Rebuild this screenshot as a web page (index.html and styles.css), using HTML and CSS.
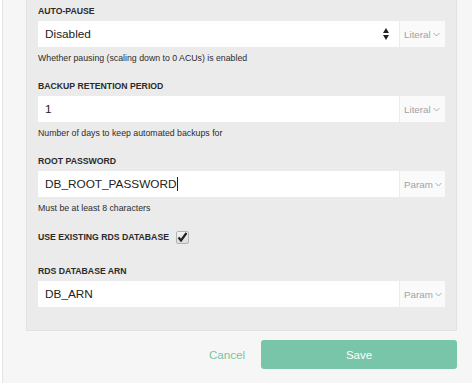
FILE: index.html
```html
<!DOCTYPE html>
<html>
<head>
<meta charset="utf-8">
<link rel="stylesheet" href="styles.css">
</head>
<body>
<div class="panel">
  <div class="fields">
    <div class="group">
      <div class="label">AUTO-PAUSE</div>
      <div class="control">
        <div class="input select">
          <span>Disabled</span>
          <svg class="arrows" width="6" height="12" viewBox="0 0 6 12"><path d="M3 0 L6 5 L0 5 Z M0 7 L6 7 L3 12 Z" fill="#222"/></svg>
        </div>
        <div class="addon">Literal <svg class="chev" width="7" height="5" viewBox="0 0 7 5"><path d="M0.5 1 L3.5 4 L6.5 1" fill="none" stroke="#a8acb0" stroke-width="1"/></svg></div>
      </div>
      <div class="help">Whether pausing (scaling down to 0 ACUs) is enabled</div>
    </div>
    <div class="group">
      <div class="label">BACKUP RETENTION PERIOD</div>
      <div class="control">
        <div class="input"><span>1</span></div>
        <div class="addon">Literal <svg class="chev" width="7" height="5" viewBox="0 0 7 5"><path d="M0.5 1 L3.5 4 L6.5 1" fill="none" stroke="#a8acb0" stroke-width="1"/></svg></div>
      </div>
      <div class="help">Number of days to keep automated backups for</div>
    </div>
    <div class="group">
      <div class="label">ROOT PASSWORD</div>
      <div class="control">
        <div class="input"><span>DB_ROOT_PASSWORD</span><span class="caret"></span></div>
        <div class="addon">Param <svg class="chev" width="7" height="5" viewBox="0 0 7 5"><path d="M0.5 1 L3.5 4 L6.5 1" fill="none" stroke="#a8acb0" stroke-width="1"/></svg></div>
      </div>
      <div class="help">Must be at least 8 characters</div>
    </div>
    <div class="check-row">
      <span class="label">USE EXISTING RDS DATABASE</span>
      <span class="checkbox"><svg width="11" height="10" viewBox="0 0 11 10"><path d="M1.5 5.5 L4 8.5 L9.5 1" fill="none" stroke="#222" stroke-width="2.2"/></svg></span>
    </div>
    <div class="group last">
      <div class="label">RDS DATABASE ARN</div>
      <div class="control">
        <div class="input"><span>DB_ARN</span></div>
        <div class="addon">Param <svg class="chev" width="7" height="5" viewBox="0 0 7 5"><path d="M0.5 1 L3.5 4 L6.5 1" fill="none" stroke="#a8acb0" stroke-width="1"/></svg></div>
      </div>
    </div>
  </div>
  <div class="footer">
    <span class="cancel">Cancel</span>
    <button class="save">Save</button>
  </div>
</div>
</body>
</html>
```
FILE: styles.css
```css
* { box-sizing: border-box; }
html, body { margin: 0; padding: 0; background: #ffffff; }
body {
  font-family: "Liberation Sans", Arial, sans-serif;
  color: #2b2b2b;
  width: 474px;
  height: 391px;
  overflow: hidden;
}
.panel {
  margin-left: 2px;
  width: 470px;
  height: 383px;
  background: #f6f6f6;
  border-left: 1px solid #e4e4e4;
  padding: 0 15px 0 23px;
}
.fields {
  background: #ebebeb;
  border: 1px solid #e2e2e2;
  border-top: none;
  padding: 4px 11px 23px 11px;
}
.group { margin-bottom: 14px; }
.group.last { margin-bottom: 0; }
.label {
  font-size: 8.7px;
  font-weight: bold;
  line-height: 14px;
  color: #2a2a2a;
}
.control {
  display: flex;
  height: 26px;
  margin-top: 3px;
}
.input {
  flex: 1;
  background: #ffffff;
  display: flex;
  align-items: center;
  padding-left: 7px;
  font-size: 11.8px;
  color: #222;
}
.select { justify-content: space-between; padding-right: 10px; }
.arrows { display: block; }
.caret {
  display: inline-block;
  width: 1px;
  height: 14px;
  background: #222;
}
.addon {
  width: 46px;
  background: #fafafa;
  border-left: 1px solid #ececec;
  display: flex;
  align-items: center;
  padding-left: 4px;
  font-size: 9.8px;
  color: #9ea3a8;
  gap: 2px;
}
.chev { display: block; margin-top: 1px; }
.help {
  font-size: 8.75px;
  line-height: 14px;
  margin-top: 4px;
  color: #2b2b2b;
}
.check-row {
  display: flex;
  align-items: center;
  height: 16px;
  margin-top: 1px;
  margin-bottom: 19px;
}
.checkbox {
  width: 13px;
  height: 13px;
  margin-left: 7px;
  border: 1px solid #b4b4b4;
  border-radius: 2px;
  background: linear-gradient(#f4f4f4, #dcdcdc);
  display: flex;
  align-items: center;
  justify-content: center;
}
.checkbox svg { display: block; }
.footer {
  display: flex;
  justify-content: flex-end;
  align-items: center;
  margin-top: 9px;
}
.cancel {
  font-size: 11.6px;
  color: #78c4a5;
  margin-right: 16px;
}
.save {
  width: 196px;
  height: 29px;
  border: none;
  border-radius: 3px;
  background: #78c5a9;
  color: #ffffff;
  font-family: "Liberation Sans", Arial, sans-serif;
  font-size: 11.5px;
}
```
